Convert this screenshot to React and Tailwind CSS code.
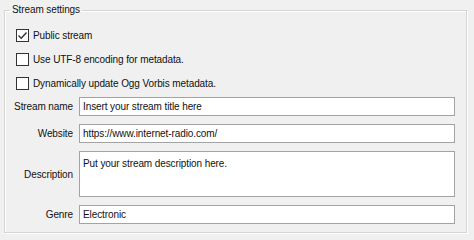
import React from 'react';

const font = { fontFamily: '"Liberation Sans", Arial, sans-serif' };

function Check({ checked, label }) {
  return (
    <label className="flex h-[13px] items-center gap-[4px]">
      <span className="flex h-[13px] w-[13px] items-center justify-center border border-[#333333] bg-white">
        {checked ? (
          <svg width="11" height="11" viewBox="0 0 11 11">
            <path d="M1.5 5.5 L4.2 8.2 L9.5 2.5" fill="none" stroke="#333333" strokeWidth="1.4" />
          </svg>
        ) : null}
      </span>
      <span>{label}</span>
    </label>
  );
}

function Field({ label, value, tall }) {
  return (
    <>
      <div className="flex items-center justify-end">{label}</div>
      <div
        className={`border border-[#a3a3a3] bg-white px-[3px] ${
          tall ? 'h-[46px] pt-[4px]' : 'flex h-[19px] items-center'
        }`}
      >
        {value}
      </div>
    </>
  );
}

export default function App() {
  return (
    <div
      className="h-[240px] w-[474px] overflow-hidden bg-[#f0f0f0] pt-[3px] text-[10px] tracking-[-0.1px] text-[#111]"
      style={font}
    >
      <fieldset className="ml-[4px] h-[230px] w-[463px] border border-[#d5d5d5] shadow-[1px_1px_0_#ffffff,inset_1px_1px_0_#ffffff]">
        <legend className="ml-[5px] px-[2px] leading-[14px]">Stream settings</legend>
        <div className="flex flex-col gap-[11px] pl-[11px] pt-[12px]">
          <Check checked label="Public stream" />
          <Check label="Use UTF-8 encoding for metadata." />
          <Check label="Dynamically update Ogg Vorbis metadata." />
        </div>
        <div className="mt-[7px] grid grid-cols-[68px_376px] gap-x-[6px] gap-y-[8px]">
          <Field label="Stream name" value="Insert your stream title here" />
          <Field label="Website" value="https://www.internet-radio.com/" />
          <Field label="Description" value="Put your stream description here." tall />
          <Field label="Genre" value="Electronic" />
        </div>
      </fieldset>
    </div>
  );
}
